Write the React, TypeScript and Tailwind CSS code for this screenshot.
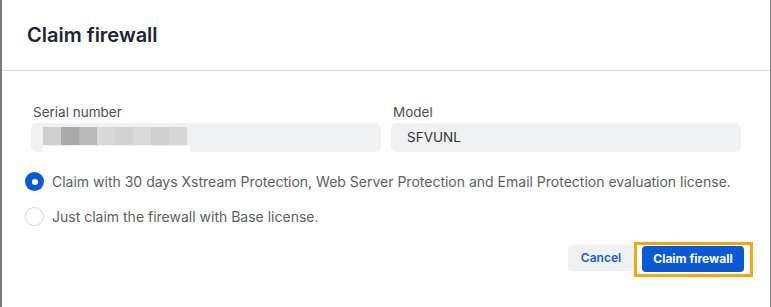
import React from 'react';

const pixels = ['#cfcfcf', '#a9a9a9', '#b9b9b9', '#d8d8d8', '#d2d2d2', '#dadada', '#d0d0d0', '#d6d6d6'];

const App = () => {
  return (
    <div className="w-[771px] h-[307px] bg-[#7a7a7a] pl-[2px] pr-[1px] font-['Inter','Noto_Sans',sans-serif]">
      <div className="h-full bg-white flex flex-col">
        <header className="h-[71px] border-b border-[#dcdcdc] pl-[25px] pt-[21px]">
          <h1 className="text-[20px] font-semibold text-[#1d2433] leading-[28px]">Claim firewall</h1>
        </header>

        <div className="flex gap-[10px] pl-[29px] pr-[29px] pt-[33px]">
          <div className="flex-1 flex flex-col">
            <label className="text-[13.5px] text-[#4b4f56] leading-[17px] pl-[2px]">Serial number</label>
            <div className="relative mt-[2px] h-[29px] rounded-[6px] bg-[#f0f1f3]">
              <div className="absolute left-[12px] top-[4px] flex">
                {pixels.map((c, i) => (
                  <div key={i} className="w-[18px] h-[18px]" style={{ backgroundColor: c }} />
                ))}
              </div>
              <div className="absolute left-[12px] top-[23px] w-[147px] h-[6px] bg-white" />
            </div>
          </div>
          <div className="flex-1 flex flex-col">
            <label className="text-[13.5px] text-[#4b4f56] leading-[17px] pl-[2px]">Model</label>
            <div className="mt-[2px] h-[29px] rounded-[6px] bg-[#f0f1f3] flex items-center pl-[16px]">
              <span className="text-[13.5px] text-[#2f3338]">SFVUNL</span>
            </div>
          </div>
        </div>

        <div className="flex flex-col gap-[16px] pl-[23px] pt-[20px]">
          <label className="flex items-center gap-[8px]">
            <span className="w-[19px] h-[19px] rounded-full bg-[#0b5ad3] flex items-center justify-center">
              <span className="w-[6px] h-[6px] rounded-full bg-white" />
            </span>
            <span className="text-[14px] text-[#5b5f66] leading-[18px]">
              Claim with 30 days Xstream Protection, Web Server Protection and Email Protection evaluation license.
            </span>
          </label>
          <label className="flex items-center gap-[8px]">
            <span className="w-[19px] h-[19px] rounded-full border-[1.5px] border-[#d2d4d8] bg-white" />
            <span className="text-[14px] text-[#5b5f66] leading-[18px]">Just claim the firewall with Base license.</span>
          </label>
        </div>

        <div className="flex justify-end items-start pr-[17px] pt-[16px]">
          <button className="mt-[3px] h-[26px] w-[66px] rounded-[4px] bg-[#f0f1f3] text-[12px] font-semibold text-[#1a5fc8]">
            Cancel
          </button>
          <span className="border-[3px] border-[#f3a712] pl-[5px] pr-[6px] pt-0 pb-[2px]">
            <button className="h-[26px] w-[102px] rounded-[4px] bg-[#0b5ad3] text-[12px] font-bold text-white">
              Claim firewall
            </button>
          </span>
        </div>
      </div>
    </div>
  );
};

export default App;
